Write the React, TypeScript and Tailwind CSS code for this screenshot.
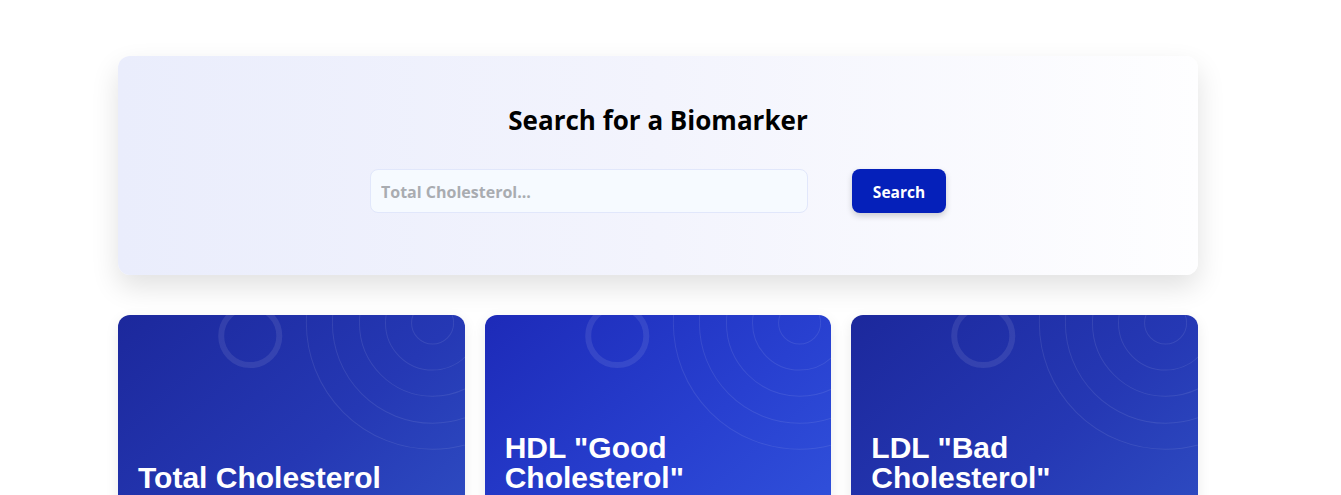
import { useState } from "react";

const MARKERS = [
  { title: "Total Cholesterol", desc: "Overall amount of cholesterol in your blood.", tone: "from-[#1c289c] via-[#2538b4] to-[#3354c8]" },
  { title: 'HDL "Good Cholesterol"', desc: "Carries cholesterol back to the liver.", tone: "from-[#1d2ab8] via-[#2840d0] to-[#3558e0]" },
  { title: 'LDL "Bad Cholesterol"', desc: "Can build up in the walls of arteries.", tone: "from-[#1c289c] via-[#2538b4] to-[#3354c8]" },
];

function Rings() {
  return (
    <svg className="absolute inset-0 h-full w-full pointer-events-none" viewBox="0 0 346 300" preserveAspectRatio="xMinYMin slice">
      <circle cx="132" cy="21" r="29" fill="none" stroke="white" strokeOpacity="0.09" strokeWidth="6" />
      {[21, 47, 73, 100, 126].map((r) => (
        <circle key={r} cx="314" cy="8" r={r} fill="none" stroke="white" strokeOpacity="0.09" strokeWidth="1" />
      ))}
    </svg>
  );
}

export default function App() {
  const [query, setQuery] = useState("");

  return (
    <div className="min-h-screen bg-white pt-14" style={{ fontFamily: '"Open Sans", sans-serif' }}>
      <div className="ml-[118px] w-[1080px] flex flex-col gap-10">
        {/* Search panel */}
        <section className="h-[219px] rounded-xl bg-gradient-to-r from-[#eaedfc] via-[#f3f4fd] to-[#fefeff] shadow-[0_12px_28px_rgba(0,0,0,0.12)] flex flex-col items-center pt-[46px]">
          <h2 className="text-[26px] leading-[36px] font-bold text-black">Search for a Biomarker</h2>
          <div className="mt-[31px] flex items-center gap-[44px]">
            <input
              value={query}
              onChange={(e) => setQuery(e.target.value)}
              placeholder="Total Cholesterol..."
              className="w-[438px] h-[44px] rounded-lg border border-[#e1e7fb] bg-[#f6faff] px-[10px] pt-[2px] text-[16px] font-bold text-gray-700 placeholder:text-[#a9acb1] outline-none"
            />
            <button className="w-[94px] h-[44px] rounded-lg bg-[#0520ba] pt-[3px] text-white text-[15.5px] font-bold shadow-[0_3px_6px_rgba(0,0,0,0.18)]">
              Search
            </button>
          </div>
        </section>

        {/* Biomarker cards */}
        <div className="grid grid-cols-3 gap-5">
          {MARKERS.map((m) => (
            <div key={m.title} className={`relative overflow-hidden h-[300px] rounded-xl bg-gradient-to-br ${m.tone} px-5 pt-[114px] shadow-[0_4px_14px_rgba(0,0,0,0.08)]`}>
              <Rings />
              <div className="relative h-[64px] flex items-end">
                <h3 className="text-[30px] leading-[30px] font-bold text-white" style={{ fontFamily: '"Liberation Sans", Arial, sans-serif' }}>
                  {m.title}
                </h3>
              </div>
              <p className="relative mt-3 text-sm text-white/80">{m.desc}</p>
            </div>
          ))}
        </div>
      </div>
    </div>
  );
}
